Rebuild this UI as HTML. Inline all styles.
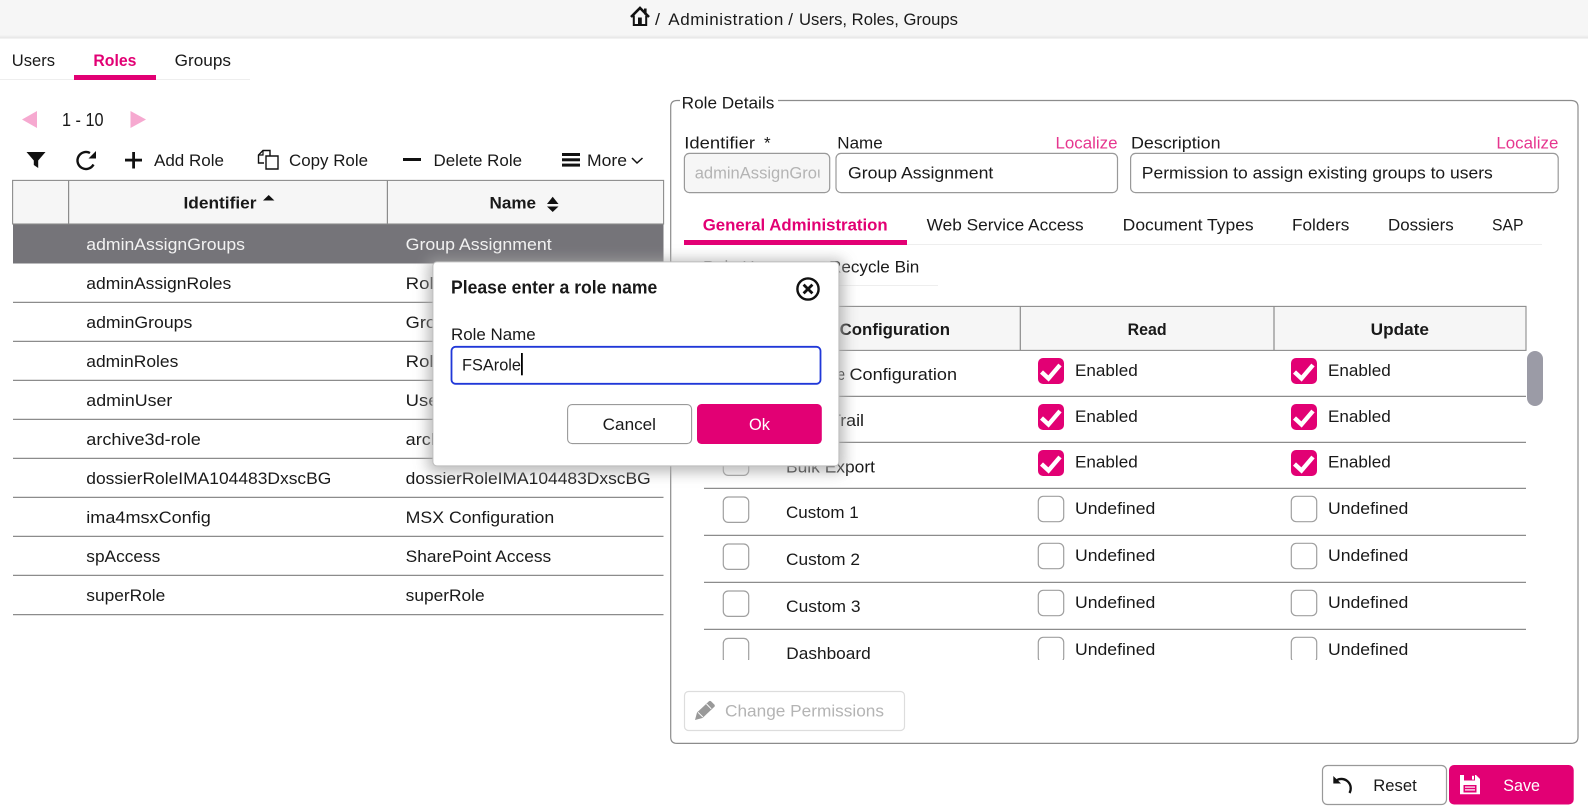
<!DOCTYPE html>
<html lang="en"><head><meta charset="utf-8"><title>Administration / Users, Roles, Groups</title>
<style>
html,body{margin:0;padding:0;background:#fff;width:1588px;height:811px;overflow:hidden}
svg{display:block;position:absolute;left:0;top:0}
text{font-family:"Liberation Sans",sans-serif;font-size:17px;fill:#191919}
.b{font-weight:bold}
.p{fill:#e20074}
.l{fill:#e6368f}
.w{fill:#f2f2f2}
.g{fill:#b4b4b4}
.ln{stroke:#8c8c8c;stroke-width:1.2}
.box{fill:#fff;stroke:#999;stroke-width:1.2}
.cb{fill:#fff;stroke:#a0a0a0;stroke-width:1.2}
</style></head><body>
<svg width="1588" height="811" viewBox="0 0 1588 811" xmlns="http://www.w3.org/2000/svg">
<defs>
<linearGradient id="hs" x1="0" y1="0" x2="0" y2="1"><stop offset="0" stop-color="#f6f6f6"/><stop offset="1" stop-color="#e4e4e4"/></linearGradient>
<filter id="blur" x="-20%" y="-30%" width="140%" height="160%"><feGaussianBlur stdDeviation="7"/></filter>
<clipPath id="tc"><rect x="700" y="350" width="840" height="310"/></clipPath>
<clipPath id="ic"><rect x="690" y="155" width="129.5" height="36"/></clipPath>
<g id="ck"><rect width="26" height="26" rx="5" fill="#e20074"/><path d="M3.5 14 L10.5 20.5 L22 7" fill="none" stroke="#fff" stroke-width="4.4"/></g>
</defs>

<!-- header -->
<rect x="0" y="0" width="1588" height="35" fill="#f6f6f6"/>
<rect x="0" y="35" width="1588" height="3.5" fill="url(#hs)"/>
<path d="M631 17 L640 8 L649 17" fill="none" stroke="#111" stroke-width="2.6"/>
<path d="M633.8 15.5 V25 H646.2 V15.5" fill="none" stroke="#111" stroke-width="2"/>
<rect x="638" y="17.5" width="3.8" height="7.5" fill="#111"/>
<rect x="644" y="8.5" width="2.6" height="6" fill="#111"/>
<text x="655" y="25" textLength="5" lengthAdjust="spacingAndGlyphs">/</text>
<text x="668.3" y="25" textLength="115" lengthAdjust="spacing">Administration</text>
<text x="788.3" y="25">/</text>
<text x="799" y="25" textLength="159" lengthAdjust="spacingAndGlyphs">Users, Roles, Groups</text>

<!-- main tabs -->
<rect x="0" y="79" width="250" height="1" fill="#eee"/>
<text x="11.8" y="66" textLength="43.2" lengthAdjust="spacingAndGlyphs">Users</text>
<text class="b p" x="93.4" y="66" textLength="43" lengthAdjust="spacingAndGlyphs">Roles</text>
<text x="174.7" y="66" textLength="56.3" lengthAdjust="spacingAndGlyphs">Groups</text>
<rect x="74" y="75" width="82" height="5" fill="#e20074"/>

<!-- pagination -->
<polygon points="37,111 37,128 22,119.5" fill="#f6a9d0"/>
<text x="62" y="126" style="font-size:18px" textLength="41.5" lengthAdjust="spacingAndGlyphs">1 - 10</text>
<polygon points="130.5,111 130.5,128 146,119.5" fill="#f6a9d0"/>

<!-- toolbar -->
<polygon points="26.5,152 45.5,152 38.2,160.5 38.2,168 33.8,165 33.8,160.5" fill="#111"/>
<path d="M90 153 A8.5 8.5 0 1 0 93.5 164.5" fill="none" stroke="#111" stroke-width="2.4"/>
<polygon points="96,151 96,158.5 88.5,158.5" fill="#111"/>
<rect x="125" y="158.7" width="17" height="2.8" fill="#111"/>
<rect x="132.2" y="152" width="2.8" height="16.5" fill="#111"/>
<text x="154" y="166" textLength="70" lengthAdjust="spacingAndGlyphs">Add Role</text>
<path d="M264 163 H258.5 V155 L263 150.5 H270 V156" fill="none" stroke="#111" stroke-width="1.4"/>
<path d="M263 150.5 V155 H258.5" fill="none" stroke="#111" stroke-width="1.2"/>
<path d="M266 156 H278 V169 H266 Z" fill="#fff" stroke="#111" stroke-width="1.4"/>
<text x="289" y="166" textLength="79" lengthAdjust="spacingAndGlyphs">Copy Role</text>
<rect x="403" y="158" width="18" height="3" fill="#111"/>
<text x="433.5" y="166" textLength="88.5" lengthAdjust="spacingAndGlyphs">Delete Role</text>
<rect x="562" y="153" width="18" height="3" fill="#111"/><rect x="562" y="158.3" width="18" height="3" fill="#111"/><rect x="562" y="163.6" width="18" height="3" fill="#111"/>
<text x="587" y="166" textLength="40" lengthAdjust="spacingAndGlyphs">More</text>
<path d="M632 158 L637 163 L642.5 158" fill="none" stroke="#111" stroke-width="1.5"/>

<!-- roles table -->
<rect x="12.6" y="180.4" width="651" height="43.6" fill="#f6f6f6" stroke="#8c8c8c" stroke-width="1.1"/>
<line class="ln" x1="68.6" y1="180" x2="68.6" y2="224"/>
<line class="ln" x1="387.4" y1="180" x2="387.4" y2="224"/>
<text class="b" x="183.5" y="208.7" textLength="73" lengthAdjust="spacingAndGlyphs" fill="#000">Identifier</text>
<polygon points="263,200.5 274.4,200.5 268.7,195" fill="#111"/>
<text class="b" x="489.5" y="208.7" textLength="46.5" lengthAdjust="spacingAndGlyphs">Name</text>
<polygon points="547,204 558.5,204 552.7,196.7" fill="#111"/>
<polygon points="547,206.5 558.5,206.5 552.7,212" fill="#111"/>

<rect x="13" y="224.5" width="650.5" height="39" fill="#757479"/>
<text class="w" x="86.3" y="250" textLength="158.7" lengthAdjust="spacingAndGlyphs">adminAssignGroups</text>
<text class="w" x="405.7" y="250" textLength="146" lengthAdjust="spacingAndGlyphs">Group Assignment</text>

<g class="ln">
<line x1="13" x2="663.5" y1="302.4" y2="302.4"/><line x1="13" x2="663.5" y1="341.4" y2="341.4"/>
<line x1="13" x2="663.5" y1="380.4" y2="380.4"/><line x1="13" x2="663.5" y1="419.4" y2="419.4"/>
<line x1="13" x2="663.5" y1="458.4" y2="458.4"/><line x1="13" x2="663.5" y1="497.4" y2="497.4"/>
<line x1="13" x2="663.5" y1="536.4" y2="536.4"/><line x1="13" x2="663.5" y1="575.4" y2="575.4"/>
<line x1="13" x2="663.5" y1="614.6" y2="614.6"/>
</g>
<text x="86.3" y="289" textLength="145" lengthAdjust="spacingAndGlyphs">adminAssignRoles</text>
<text x="405.7" y="289" textLength="140" lengthAdjust="spacingAndGlyphs">Role Assignment</text>
<text x="86.3" y="328" textLength="106" lengthAdjust="spacingAndGlyphs">adminGroups</text>
<text x="405.7" y="328" textLength="170" lengthAdjust="spacingAndGlyphs">Group Administration</text>
<text x="86.3" y="367" textLength="92" lengthAdjust="spacingAndGlyphs">adminRoles</text>
<text x="405.7" y="367" textLength="160" lengthAdjust="spacingAndGlyphs">Role Administration</text>
<text x="86.3" y="406" textLength="86" lengthAdjust="spacingAndGlyphs">adminUser</text>
<text x="405.7" y="406" textLength="160" lengthAdjust="spacingAndGlyphs">User Administration</text>
<text x="86.3" y="445" textLength="114.5" lengthAdjust="spacingAndGlyphs">archive3d-role</text>
<text x="405.7" y="445" textLength="114.5" lengthAdjust="spacingAndGlyphs">archive3d-role</text>
<text x="86.3" y="484" textLength="245" lengthAdjust="spacingAndGlyphs">dossierRoleIMA104483DxscBG</text>
<text x="405.7" y="484" textLength="245" lengthAdjust="spacingAndGlyphs">dossierRoleIMA104483DxscBG</text>
<text x="86.3" y="523" textLength="124.5" lengthAdjust="spacingAndGlyphs">ima4msxConfig</text>
<text x="405.7" y="523" textLength="148.5" lengthAdjust="spacingAndGlyphs">MSX Configuration</text>
<text x="86.3" y="562" textLength="74" lengthAdjust="spacingAndGlyphs">spAccess</text>
<text x="405.7" y="562" textLength="145.5" lengthAdjust="spacingAndGlyphs">SharePoint Access</text>
<text x="86.3" y="601" textLength="79" lengthAdjust="spacingAndGlyphs">superRole</text>
<text x="405.7" y="601" textLength="79" lengthAdjust="spacingAndGlyphs">superRole</text>

<!-- role details fieldset -->
<path d="M680 100.5 H677 Q670.7 100.5 670.7 107 V737 Q670.7 743.4 677 743.4 H1571 Q1578 743.4 1578 737 V107 Q1578 100.5 1571 100.5 H778" fill="none" stroke="#8c8c8c" stroke-width="1.2"/>
<text x="681.7" y="108.3" textLength="92.6" lengthAdjust="spacingAndGlyphs">Role Details</text>

<text x="684.3" y="148.3" textLength="70.7" lengthAdjust="spacingAndGlyphs">Identifier</text>
<text x="764" y="148.3">*</text>
<text x="837.3" y="148.3" textLength="45.4" lengthAdjust="spacingAndGlyphs">Name</text>
<text class="l" x="1055.5" y="148.3" textLength="62" lengthAdjust="spacingAndGlyphs">Localize</text>
<text x="1131" y="148.3" textLength="89.6" lengthAdjust="spacingAndGlyphs">Description</text>
<text class="l" x="1496.4" y="148.3" textLength="62" lengthAdjust="spacingAndGlyphs">Localize</text>

<rect x="684.4" y="153.4" width="145.3" height="39.2" rx="5" fill="#f6f6f6" stroke="#999" stroke-width="1.2"/>
<g clip-path="url(#ic)"><text class="g" x="694.7" y="178.3" textLength="149" lengthAdjust="spacingAndGlyphs">adminAssignGroups</text></g>
<rect class="box" x="836" y="153.4" width="281.5" height="39.2" rx="5"/>
<text x="848" y="178.3" textLength="145.3" lengthAdjust="spacingAndGlyphs">Group Assignment</text>
<rect class="box" x="1130.6" y="153.4" width="427.6" height="39.2" rx="5"/>
<text x="1141.8" y="178.3" textLength="351" lengthAdjust="spacingAndGlyphs">Permission to assign existing groups to users</text>

<!-- permission tabs -->
<rect x="684" y="244" width="858" height="1" fill="#eee"/>
<rect x="684" y="240" width="223" height="5" fill="#e20074"/>
<text class="b p" x="702.7" y="230.7" textLength="185" lengthAdjust="spacingAndGlyphs">General Administration</text>
<text x="926.7" y="230.7" textLength="157" lengthAdjust="spacingAndGlyphs">Web Service Access</text>
<text x="1122.7" y="230.7" textLength="131" lengthAdjust="spacingAndGlyphs">Document Types</text>
<text x="1292" y="230.7" textLength="57.3" lengthAdjust="spacingAndGlyphs">Folders</text>
<text x="1388" y="230.7" textLength="65.7" lengthAdjust="spacingAndGlyphs">Dossiers</text>
<text x="1492" y="230.7" textLength="31.5" lengthAdjust="spacingAndGlyphs">SAP</text>
<rect x="684" y="285" width="254" height="1" fill="#eee"/>
<text x="703" y="272.3" textLength="88" lengthAdjust="spacingAndGlyphs">Role Usage</text>
<text x="829" y="272.3" textLength="90.3" lengthAdjust="spacingAndGlyphs">Recycle Bin</text>

<!-- permission table -->
<rect x="704" y="306.4" width="822" height="44" fill="#f6f6f6" stroke="#8c8c8c" stroke-width="1.1"/>
<line class="ln" x1="1020.3" y1="306" x2="1020.3" y2="350"/>
<line class="ln" x1="1274" y1="306" x2="1274" y2="350"/>
<text class="b" x="839.6" y="335" textLength="110.4" lengthAdjust="spacingAndGlyphs">Configuration</text>
<text class="b" x="1127.6" y="335" textLength="39" lengthAdjust="spacingAndGlyphs">Read</text>
<text class="b" x="1370.7" y="335" textLength="58.3" lengthAdjust="spacingAndGlyphs">Update</text>

<g clip-path="url(#tc)">
<g class="ln">
<line x1="704" x2="1526" y1="396.4" y2="396.4"/><line x1="704" x2="1526" y1="442.4" y2="442.4"/>
<line x1="704" x2="1526" y1="488.4" y2="488.4"/><line x1="704" x2="1526" y1="535.4" y2="535.4"/>
<line x1="704" x2="1526" y1="582.4" y2="582.4"/><line x1="704" x2="1526" y1="629.4" y2="629.4"/>
</g>
<text x="786" y="380" textLength="59" lengthAdjust="spacingAndGlyphs">Appliance</text>
<text x="849.5" y="380" textLength="107.5" lengthAdjust="spacingAndGlyphs">Configuration</text>
<text x="786" y="426" textLength="40" lengthAdjust="spacingAndGlyphs">Audit</text>
<text x="830" y="426" textLength="34" lengthAdjust="spacingAndGlyphs">Trail</text>
<rect class="cb" x="723.3" y="450" width="25.4" height="25.4" rx="5"/>
<text x="786" y="472.3" textLength="89" lengthAdjust="spacingAndGlyphs">Bulk Export</text>
<rect class="cb" x="723.3" y="497" width="25.4" height="25.4" rx="5"/>
<text x="786" y="518" textLength="72.7" lengthAdjust="spacingAndGlyphs">Custom 1</text>
<rect class="cb" x="723.3" y="544" width="25.4" height="25.4" rx="5"/>
<text x="786" y="565" textLength="74" lengthAdjust="spacingAndGlyphs">Custom 2</text>
<rect class="cb" x="723.3" y="591" width="25.4" height="25.4" rx="5"/>
<text x="786" y="612" textLength="74.5" lengthAdjust="spacingAndGlyphs">Custom 3</text>
<rect class="cb" x="723.3" y="638.4" width="25.4" height="25.4" rx="5"/>
<text x="786.3" y="659" textLength="84.4" lengthAdjust="spacingAndGlyphs">Dashboard</text>

<use href="#ck" x="1038" y="358"/><text x="1075" y="376" textLength="62.7" lengthAdjust="spacingAndGlyphs">Enabled</text>
<use href="#ck" x="1291" y="358"/><text x="1328" y="376" textLength="62.7" lengthAdjust="spacingAndGlyphs">Enabled</text>
<use href="#ck" x="1038" y="404"/><text x="1075" y="422" textLength="62.7" lengthAdjust="spacingAndGlyphs">Enabled</text>
<use href="#ck" x="1291" y="404"/><text x="1328" y="422" textLength="62.7" lengthAdjust="spacingAndGlyphs">Enabled</text>
<use href="#ck" x="1038" y="450"/><text x="1075" y="467.7" textLength="62.7" lengthAdjust="spacingAndGlyphs">Enabled</text>
<use href="#ck" x="1291" y="450"/><text x="1328" y="467.7" textLength="62.7" lengthAdjust="spacingAndGlyphs">Enabled</text>

<rect class="cb" x="1038.3" y="496.3" width="25.4" height="25.4" rx="5"/><text x="1075" y="514" textLength="80.3" lengthAdjust="spacingAndGlyphs">Undefined</text>
<rect class="cb" x="1291.3" y="496.3" width="25.4" height="25.4" rx="5"/><text x="1328" y="514" textLength="80.3" lengthAdjust="spacingAndGlyphs">Undefined</text>
<rect class="cb" x="1038.3" y="543.3" width="25.4" height="25.4" rx="5"/><text x="1075" y="561" textLength="80.3" lengthAdjust="spacingAndGlyphs">Undefined</text>
<rect class="cb" x="1291.3" y="543.3" width="25.4" height="25.4" rx="5"/><text x="1328" y="561" textLength="80.3" lengthAdjust="spacingAndGlyphs">Undefined</text>
<rect class="cb" x="1038.3" y="590.3" width="25.4" height="25.4" rx="5"/><text x="1075" y="608" textLength="80.3" lengthAdjust="spacingAndGlyphs">Undefined</text>
<rect class="cb" x="1291.3" y="590.3" width="25.4" height="25.4" rx="5"/><text x="1328" y="608" textLength="80.3" lengthAdjust="spacingAndGlyphs">Undefined</text>
<rect class="cb" x="1038.3" y="637.3" width="25.4" height="25.4" rx="5"/><text x="1075" y="655" textLength="80.3" lengthAdjust="spacingAndGlyphs">Undefined</text>
<rect class="cb" x="1291.3" y="637.3" width="25.4" height="25.4" rx="5"/><text x="1328" y="655" textLength="80.3" lengthAdjust="spacingAndGlyphs">Undefined</text>
</g>
<rect x="1527" y="351" width="16" height="55" rx="8" fill="#9b9ba6"/>

<!-- change permissions -->
<rect x="684.5" y="691.5" width="220" height="39" rx="4" fill="#fff" stroke="#ddd" stroke-width="1.2"/>
<path d="M695 720 L697 712.5 L709 701.2 Q710 700.5 711 701.3 L714.5 704.8 Q715.2 705.8 714.4 706.8 L702.5 718 Z" fill="#999"/>
<path d="M698 712.3 L702.8 717 M706.5 704 L711.2 708.8" stroke="#fff" stroke-width="1" fill="none"/>
<text class="g" x="725" y="716.7" textLength="159" lengthAdjust="spacingAndGlyphs">Change Permissions</text>

<!-- reset / save -->
<rect class="box" x="1322.5" y="765.5" width="124" height="39" rx="5"/>
<path d="M1337 780 A9.4 9.4 0 0 1 1349.5 793" fill="none" stroke="#111" stroke-width="2.3"/>
<polygon points="1333.3,776 1333.3,783.5 1341,783.5" fill="#111"/>
<text x="1373.3" y="791" textLength="43.4" lengthAdjust="spacingAndGlyphs">Reset</text>
<rect x="1449" y="765" width="124.7" height="39.5" rx="5" fill="#e20074"/>
<path d="M1460 775 H1476 L1480 779 V794.3 H1460 Z" fill="#fff"/>
<rect x="1464" y="775" width="11" height="5.5" fill="#e20074"/>
<rect x="1472" y="775.8" width="2" height="3.8" fill="#fff"/>
<rect x="1463.5" y="785" width="13" height="7.5" fill="#e20074"/>
<rect x="1465" y="786.5" width="10" height="1.2" fill="#fff"/><rect x="1465" y="789.3" width="10" height="1.2" fill="#fff"/>
<text style="fill:#fff" x="1503.3" y="791" textLength="36.7" lengthAdjust="spacingAndGlyphs">Save</text>

<!-- dialog -->
<rect x="428" y="260" width="416" height="212" rx="6" fill="#a8a8a8" opacity=".8" filter="url(#blur)"/>
<rect x="432.9" y="261.9" width="406" height="204" rx="4" fill="#fff" stroke="#bdbdbd" stroke-width="1"/>
<text class="b" x="451" y="293.3" style="font-size:18px" textLength="206.3" lengthAdjust="spacingAndGlyphs">Please enter a role name</text>
<circle cx="808" cy="289" r="10.6" fill="#fff" stroke="#111" stroke-width="2.4"/>
<path d="M803.6 284.6 L812.4 293.4 M812.4 284.6 L803.6 293.4" stroke="#111" stroke-width="2.8" fill="none"/>
<text x="451" y="340" textLength="84.7" lengthAdjust="spacingAndGlyphs">Role Name</text>
<rect x="451.5" y="346.8" width="369" height="37" rx="4" fill="#fff" stroke="#2038d8" stroke-width="1.8"/>
<text x="462" y="370.7" textLength="59" lengthAdjust="spacingAndGlyphs">FSArole</text>
<rect x="521" y="353" width="1.8" height="22.3" fill="#000"/>
<rect x="567.6" y="404.6" width="124" height="39" rx="4.5" fill="#fff" stroke="#9a9a9a" stroke-width="1.1"/>
<text x="602.7" y="430" textLength="53.3" lengthAdjust="spacingAndGlyphs">Cancel</text>
<rect x="697" y="404" width="124.8" height="40" rx="4.5" fill="#e20074"/>
<text style="fill:#fff" x="749" y="430" textLength="21" lengthAdjust="spacingAndGlyphs">Ok</text>
</svg>
</body></html>
